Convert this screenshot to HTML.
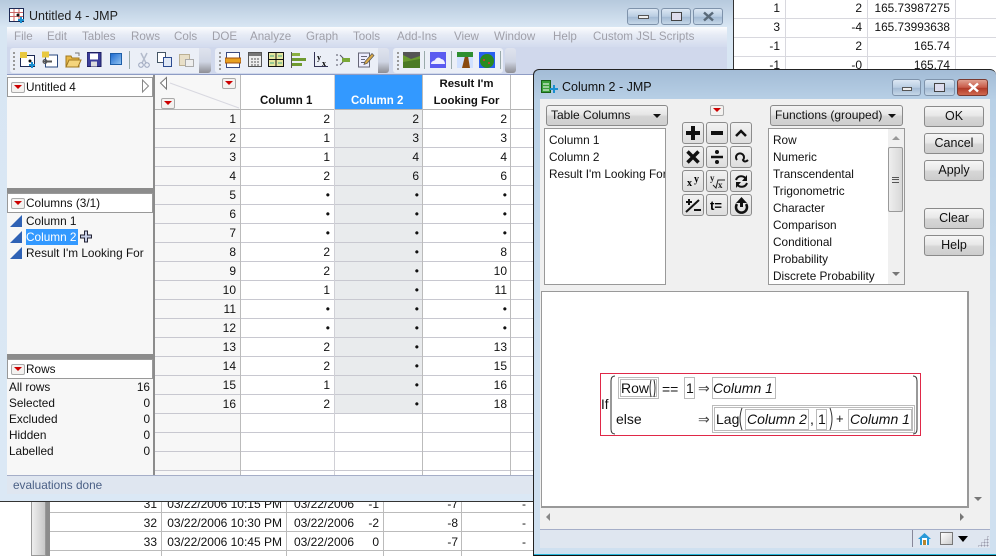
<!DOCTYPE html>
<html><head><meta charset="utf-8"><style>
html,body{margin:0;padding:0}
body{width:996px;height:556px;overflow:hidden;position:relative;background:#fff;font:11.8px/16px "Liberation Sans",sans-serif;color:#111}
div,span,svg{position:absolute;box-sizing:border-box}
.t{white-space:nowrap}
.col{text-align:right;line-height:19px;white-space:pre;font-size:12px}
.rb{width:14px;height:11px;background:#f4f2f0;border:1px solid #aaa;border-radius:2px}
.rb:after{content:"";position:absolute;left:2px;top:2px;border:4px solid transparent;border-top:4px solid #c00;border-bottom:0}
.sec{background:#fff;border:1px solid #999;left:7px;width:146px;height:20px}
.tri{width:0;height:0;left:10px;border-style:solid;border-width:0 0 12px 12px;border-color:transparent transparent #2f62b5 transparent}
.wb{height:17px;top:8px;border:1px solid #7f93ab;border-radius:3px;background:linear-gradient(#dce7f3,#b9cde2 50%,#a4bbd4 55%,#c5d7e8)}
.btn{background:linear-gradient(#f6f6f6,#e8e8e8 45%,#d6d6d6 55%,#cdcdcd);border:1px solid #8a8a8a;border-radius:3px;text-align:center;line-height:19px;font-size:12.5px}
.sel{background:linear-gradient(#f4f4f4,#e6e6e6 45%,#d4d4d4 55%,#cfcfcf);border:1px solid #8a8a8a;border-radius:3px;line-height:19px;padding-left:4px;font-size:12px;white-space:nowrap}
.sel:after{content:"";position:absolute;right:6px;top:8px;border:4px solid transparent;border-top:4px solid #111;border-bottom:0}
.cb{width:22px;height:22px;background:linear-gradient(#f2f2f2,#dedede);border:1px solid #8c8c8c;border-radius:3px}
.m{top:29px;color:#9f9fa8;font-size:11.6px}
.bx{border:1px solid #bbb}
.i{font-style:italic}
.tb{top:51px;height:18px}
.sep{width:1px;background:#9aa;height:18px;top:51px}
.ov{top:48px;height:25px;background:linear-gradient(#dfe3ee 0,#d0d6e4 55%,#8e8e94);border-radius:0 3px 3px 0}
.arrow{font-size:14px;color:#444}
</style></head><body>

<!-- background window, top-right -->
<div style="left:734px;top:0;width:262px;height:70px;background:repeating-linear-gradient(#fff 0,#fff 18px,#d8d8de 18px,#d8d8de 19px)"></div>
<div style="left:785px;top:0;width:1px;height:70px;background:#d8d8de"></div>
<div style="left:867px;top:0;width:1px;height:70px;background:#d8d8de"></div>
<div style="left:955px;top:0;width:1px;height:70px;background:#d8d8de"></div>
<div class="col" style="left:750px;width:30px;top:-1px">1
3
-1
-1</div>
<div class="col" style="left:830px;width:32px;top:-1px">2
-4
2
-0</div>
<div class="col" style="left:860px;width:90px;top:-1px;font-size:11.8px">165.73987275
165.73993638
165.74
165.74</div>

<!-- background window, bottom -->
<div style="left:31px;top:502px;width:15px;height:54px;background:linear-gradient(90deg,#eee,#c8c8c8);border:1px solid #999;border-top:0"></div>
<div style="left:46px;top:502px;width:4px;height:54px;background:#8c8c8c"></div>
<div style="left:50px;top:502px;width:490px;height:54px;background:repeating-linear-gradient(#fff 0,#fff 10px,#bbb 10px,#bbb 11px,#fff 11px,#fff 29px,#bbb 29px,#bbb 30px,#fff 30px,#fff 48px,#bbb 48px,#bbb 49px,#fff 49px)"></div>
<div style="left:161px;top:502px;width:1px;height:54px;background:#bbb"></div>
<div style="left:286px;top:502px;width:1px;height:54px;background:#bbb"></div>
<div style="left:383px;top:502px;width:1px;height:54px;background:#bbb"></div>
<div style="left:461px;top:502px;width:1px;height:54px;background:#bbb"></div>
<div style="left:0;top:502px;width:540px;height:54px;overflow:hidden">
<div class="col" style="left:120px;width:37px;top:-7px">31
32
33
34</div>
<div class="col" style="left:162px;width:120px;top:-7px">03/22/2006 10:15 PM
03/22/2006 10:30 PM
03/22/2006 10:45 PM
03/22/2006 11:00 PM</div>
<div class="col" style="left:287px;width:67px;top:-7px">03/22/2006
03/22/2006
03/22/2006
03/22/2006</div>
<div class="col" style="left:350px;width:29px;top:-7px">-1
-2
0
-1</div>
<div class="col" style="left:420px;width:38px;top:-7px">-7
-8
-7
-6</div>
<div class="col" style="left:500px;width:26px;top:-7px">-
-
-
-</div>
</div>

<!-- main window -->
<div style="left:0;top:0;width:734px;height:502px;background:linear-gradient(#b6c9dd 0,#d8e6f3 27px,#dbe8f5 500px);border:1px solid #333;border-width:0 1px 1px 0;overflow:hidden">
  <svg style="left:9px;top:8px" width="16" height="16" viewBox="0 0 16 16"><rect x=".5" y=".5" width="14" height="13" fill="#fff" stroke="#1d2a55"/><path d="M1 4.500H14M1 8.500H14M5 1V13M10 1V13" stroke="#c66" stroke-width="1"/><circle cx="9" cy="7" r="1.500" fill="#111"/><path d="M12 9v6M9 12h6" stroke="#1a8fd0" stroke-width="2"/></svg>
  <div class="t" style="left:29px;top:8px;color:#222;font-size:12.500px">Untitled 4 - JMP</div>
  <div class="wb" style="left:627px;width:32px"><div style="left:10px;top:6px;width:11px;height:4px;border:1px solid #555;background:#eee"></div></div>
  <div class="wb" style="left:661px;width:30px"><div style="left:9px;top:3px;width:11px;height:9px;border:1px solid #444;background:#dde"></div></div>
  <div class="wb" style="left:693px;width:30px"><svg style="left:8px;top:2px" width="13" height="11"><path d="M2 1.500l9 8M11 1.500l-9 8" stroke="#5a6a7a" stroke-width="2.500"/></svg></div>
  <!-- menu -->
  <div style="left:7px;top:27px;width:720px;height:20px;background:linear-gradient(#fbfcfe,#e6ebf5 40%,#d3dbee)"></div>
  <div style="left:7px;top:47px;width:720px;height:28px;background:#d0d8ec;border-bottom:1px solid #8e9cc4"></div>
  <div class="t m" style="left:14px">File</div><div class="t m" style="left:47px">Edit</div><div class="t m" style="left:82px">Tables</div><div class="t m" style="left:131px">Rows</div><div class="t m" style="left:174px">Cols</div><div class="t m" style="left:212px">DOE</div><div class="t m" style="left:250px">Analyze</div><div class="t m" style="left:306px">Graph</div><div class="t m" style="left:353px">Tools</div><div class="t m" style="left:397px">Add-Ins</div><div class="t m" style="left:454px">View</div><div class="t m" style="left:494px">Window</div><div class="t m" style="left:553px">Help</div><div class="t m" style="left:593px">Custom JSL Scripts</div>
  <!-- toolbars -->
  <div style="left:10px;top:48px;width:190px;height:25px;background:#ebeff7;border-radius:3px 0 0 3px"></div>
  <div class="ov" style="left:199px;width:12px"></div>
  <div style="left:215px;top:48px;width:164px;height:25px;background:#ebeff7;border-radius:3px 0 0 3px"></div>
  <div class="ov" style="left:378px;width:11px"></div>
  <div style="left:393px;top:48px;width:110px;height:25px;background:#ebeff7;border-radius:3px"></div>
  <div class="ov" style="left:505px;width:11px;border-radius:3px"></div>
  <div style="left:13px;top:52px;width:2px;height:18px;background:repeating-linear-gradient(#999 0,#999 2px,transparent 2px,transparent 4px)"></div>
  <div style="left:219px;top:52px;width:2px;height:18px;background:repeating-linear-gradient(#999 0,#999 2px,transparent 2px,transparent 4px)"></div>
  <div style="left:397px;top:52px;width:2px;height:18px;background:repeating-linear-gradient(#999 0,#999 2px,transparent 2px,transparent 4px)"></div>
  <svg class="tb" style="left:20px" width="16" height="16" viewBox="0 0 16 16"><rect x=".5" y="3.500" width="14" height="11" fill="#fff" stroke="#1d2a55"/><rect x="0" y="0" width="7" height="6" fill="#e8c840"/><circle cx="10" cy="9" r="1.500" fill="#111"/><path d="M12 10v6M9 13h6" stroke="#1a8fd0" stroke-width="2"/></svg>
  <svg class="tb" style="left:42px" width="17" height="17" viewBox="0 0 17 17"><rect x="3.500" y="3.500" width="12" height="12" fill="#fff" stroke="#2a4a80"/><rect x="0" y="0" width="7" height="6" fill="#e8c840"/><path d="M1 10h9" stroke="#555" stroke-width="2"/><circle cx="3" cy="10" r="2" fill="none" stroke="#555"/></svg>
  <svg class="tb" style="left:65px" width="17" height="16" viewBox="0 0 17 16"><path d="M1 4h5l1 2h7v9H1z" fill="#e8b848" stroke="#a07820"/><path d="M1 15l3-7h12l-3 7z" fill="#f4d47c" stroke="#a07820"/><path d="M10 1h4v3" fill="none" stroke="#777"/></svg>
  <svg class="tb" style="left:87px" width="15" height="15" viewBox="0 0 15 15"><rect width="14" height="14" fill="#3c3e9a" stroke="#1d1d60"/><rect x="3" y="1" width="8" height="6" fill="#fff"/><rect x="4" y="9" width="6" height="5" fill="#ddd"/></svg>
  <div style="left:110px;top:53px;width:12px;height:12px;background:linear-gradient(135deg,#1f6bd0,#8ec1f0);border:1px solid #1d5ea8"></div>
  <div class="sep" style="left:129px"></div>
  <svg class="tb" style="left:137px" width="14" height="16" viewBox="0 0 14 16"><path d="M4 1l5 10M10 1l-5 10" stroke="#b4bccc" stroke-width="1.500"/><circle cx="4" cy="13" r="2.300" fill="none" stroke="#9aa4bc"/><circle cx="10" cy="13" r="2.300" fill="none" stroke="#9aa4bc"/></svg>
  <svg class="tb" style="left:157px" width="16" height="16" viewBox="0 0 16 16"><rect x=".5" y=".5" width="8" height="10" fill="#fff" stroke="#456"/><rect x="6.500" y="5.500" width="8" height="9" fill="#dfe8f6" stroke="#2a4a90"/></svg>
  <svg class="tb" style="left:179px" width="16" height="16" viewBox="0 0 16 16"><rect x=".5" y="2.500" width="10" height="11" fill="#e8dfc8" stroke="#bbb094"/><rect x="6.500" y="7.500" width="8" height="7" fill="#eee" stroke="#aaa"/></svg>
  <svg class="tb" style="left:225px" width="16" height="16" viewBox="0 0 16 16"><rect x="1.500" y=".5" width="13" height="15" fill="#fff" stroke="#3a4a80"/><rect x="0" y="6" width="16" height="5" fill="#e8a020" stroke="#a05010"/></svg>
  <svg class="tb" style="left:248px" width="15" height="16" viewBox="0 0 15 16"><rect x=".5" y=".5" width="13" height="14" fill="#eee" stroke="#555"/><rect x="1" y="1" width="12" height="3" fill="#777"/><path d="M3 7h2M6 7h2M9 7h2M3 10h2M6 10h2M9 10h2M3 13h2M6 13h2M9 13h2" stroke="#555"/></svg>
  <svg class="tb" style="left:268px" width="17" height="16" viewBox="0 0 17 16"><rect x=".5" y=".5" width="15" height="14" fill="#e6e6a0" stroke="#111"/><path d="M8 0v15M0 7.500h16" stroke="#111"/><path d="M3 3v2M5 3v2M11 3v2M13 3v2M3 10v2M5 10v2M11 10v2M13 10v2" stroke="#4a8"/></svg>
  <svg class="tb" style="left:291px" width="15" height="16" viewBox="0 0 15 16"><path d="M.5 0v16" stroke="#555"/><rect x="1" y="1" width="8" height="3" fill="#8ab040"/><rect x="1" y="6" width="14" height="3" fill="#6f9a30"/><rect x="1" y="11" width="10" height="3" fill="#6f9a30"/></svg>
  <svg class="tb" style="left:313px" width="16" height="16" viewBox="0 0 16 16"><path d="M1.500 0v14.500H15" fill="none" stroke="#335"/><text x="4" y="8" font-family="Liberation Serif" font-size="8" font-weight="bold">y</text><text x="9" y="14" font-family="Liberation Serif" font-size="8" font-weight="bold">x</text></svg>
  <svg class="tb" style="left:335px" width="16" height="16" viewBox="0 0 16 16"><path d="M1 3h2M1 8h2M1 13h2M5 3l5 5-5 5" stroke="#556" fill="none"/><rect x="7" y="6" width="8" height="4" fill="#7aa838"/></svg>
  <svg class="tb" style="left:358px" width="17" height="17" viewBox="0 0 17 17"><rect x=".5" y="1.500" width="11" height="14" fill="#eef" stroke="#667"/><path d="M3 5h6M3 8h4M3 11h4" stroke="#667"/><path d="M14 2l2 2-7 8-3 1 1-3z" fill="#d8a848" stroke="#555" stroke-width=".7"/></svg>
  <svg class="tb" style="left:403px" width="17" height="16" viewBox="0 0 17 16"><rect width="17" height="16" fill="#6a9a30"/><path d="M0 0h17v4L8 7 0 3z" fill="#555"/><path d="M0 10l17-3v9H0z" fill="#4a7a24"/></svg>
  <div class="sep" style="left:424px"></div>
  <svg class="tb" style="left:430px" width="16" height="16" viewBox="0 0 16 16"><rect width="16" height="16" fill="#5a5af0"/><path d="M1 12c0-3 3-3 4-4 1-3 5-3 6-1 2 0 4 2 4 5z" fill="#eef"/></svg>
  <div class="sep" style="left:451px"></div>
  <svg class="tb" style="left:457px" width="16" height="16" viewBox="0 0 16 16"><rect width="16" height="16" fill="#cfe0ff"/><path d="M5 16L8 4h3l2 12z" fill="#8a4a10"/><rect x="0" y="0" width="16" height="5" fill="#2f8f2f"/></svg>
  <svg class="tb" style="left:479px" width="16" height="16" viewBox="0 0 16 16"><rect width="16" height="16" fill="#2a60f0"/><ellipse cx="8" cy="9" rx="7" ry="7" fill="#2a8a20"/><circle cx="5" cy="8" r="1" fill="#d33"/><circle cx="10" cy="11" r="1" fill="#d33"/></svg>
  <div class="sep" style="left:500px"></div>
  <!-- left panel -->
  <div style="left:7px;top:75px;width:148px;height:400px;background:#f7f7f7"></div>
  <div style="left:153px;top:75px;width:2px;height:400px;background:#8c8c8c"></div>
  <div class="sec" style="top:77px"></div>
  <div class="rb" style="left:11px;top:82px"></div>
  <div class="t" style="left:26px;top:79px">Untitled 4</div>
  <svg style="left:141px;top:79px" width="10" height="15"><path d="M1.500 1l6 6-6 6z" fill="#fff" stroke="#888"/></svg>
  <div style="left:7px;top:188px;width:146px;height:5px;background:#8c8c8c"></div>
  <div class="sec" style="top:193px"></div>
  <div class="rb" style="left:11px;top:198px"></div>
  <div class="t" style="left:26px;top:195px">Columns (3/1)</div>
  <div class="tri" style="top:215px"></div><div class="t" style="left:26px;top:213px">Column 1</div>
  <div class="tri" style="top:231px"></div><div style="left:26px;top:229px;width:52px;height:16px;background:#3399ff"></div><div class="t" style="left:26px;top:229px;color:#fff">Column 2</div>
  <svg style="left:80px;top:230px" width="13" height="14"><path d="M4.500 1h3v4h4v3h-4v4h-3V8h-4V5h4z" fill="#c8d0e8" stroke="#223"/></svg>
  <div class="tri" style="top:247px"></div><div class="t" style="left:26px;top:245px">Result I'm Looking For</div>
  <div style="left:7px;top:354px;width:146px;height:5px;background:#8c8c8c"></div>
  <div class="sec" style="top:359px"></div>
  <div class="rb" style="left:11px;top:364px"></div>
  <div class="t" style="left:26px;top:361px">Rows</div>
  <div class="t" style="left:9px;top:379px">All rows</div><div class="t" style="left:9px;top:395px">Selected</div><div class="t" style="left:9px;top:411px">Excluded</div><div class="t" style="left:9px;top:427px">Hidden</div><div class="t" style="left:9px;top:443px">Labelled</div>
  <div class="t" style="right:583px;top:379px">16</div><div class="t" style="right:583px;top:395px">0</div><div class="t" style="right:583px;top:411px">0</div><div class="t" style="right:583px;top:427px">0</div><div class="t" style="right:583px;top:443px">0</div>
  <!-- table -->
  <div style="left:155px;top:75px;width:85px;height:400px;background:#f7f7f7"></div>
  <div style="left:240px;top:75px;width:487px;height:400px;background:#fff"></div>
  <div style="left:334px;top:75px;width:88px;height:34px;background:#3399ff"></div>
  <div style="left:334px;top:109px;width:88px;height:304px;background:#e9ebed"></div>
  <div style="left:155px;top:109px;width:572px;height:366px;background:repeating-linear-gradient(#c8c8d0 0,#c8c8d0 1px,transparent 1px,transparent 19px)"></div>
  <div style="left:155px;top:109px;width:572px;height:1px;background:#b4b4b4"></div>
  <div style="left:240px;top:75px;width:1px;height:400px;background:#bbb"></div>
  <div style="left:334px;top:75px;width:1px;height:400px;background:#d0d0d6"></div>
  <div style="left:422px;top:75px;width:1px;height:400px;background:#bbb"></div>
  <div style="left:510px;top:75px;width:1px;height:400px;background:#bbb"></div>
  <svg style="left:155px;top:75px" width="85" height="34"><path d="M15 8L84 33" stroke="#d8d8e0" fill="none"/><path d="M11.500 2.500L5.500 8l6 6z" fill="#fff" stroke="#777"/></svg>
  <div class="rb" style="left:222px;top:78px"></div>
  <div class="rb" style="left:161px;top:98px"></div>
  <div class="t" style="left:260px;top:93px;font-weight:bold;font-size:11.500px">Column 1</div>
  <div class="t" style="left:351px;top:93px;font-weight:bold;font-size:11.500px;color:#fff">Column 2</div>
  <div class="t" style="left:423px;top:76px;width:87px;text-align:center;font-weight:bold;font-size:11.400px;line-height:17px">Result I'm<br>Looking For</div>
  <div class="col" style="left:155px;width:81px;top:110px">1
2
3
4
5
6
7
8
9
10
11
12
13
14
15
16</div>
  <div class="col" style="left:240px;width:90px;top:110px">2
1
1
2
•
•
•
2
2
1
•
•
2
2
1
2</div>
  <div class="col" style="left:334px;width:85px;top:110px">2
3
4
6
•
•
•
•
•
•
•
•
•
•
•
•</div>
  <div class="col" style="left:422px;width:85px;top:110px">2
3
4
6
•
•
•
8
10
11
•
•
13
15
16
18</div>
  <div style="left:7px;top:475px;width:720px;height:19px;background:#dfe6f0;border-top:1px solid #a5aec8"></div>
  <div class="t" style="left:13px;top:477px;color:#4a5f85">evaluations done</div>
</div>

<!-- dialog -->
<div style="left:533px;top:69px;width:463px;height:487px;background:linear-gradient(#a3bcd6 0,#b8d0e6 30px,#cfe0f0 300px);border:1px solid #222;border-radius:6px 6px 0 0;border-right:0;border-bottom:1px solid #111"></div>
<div style="left:534px;top:554px;width:462px;height:1px;background:#29b6d8"></div>
<svg style="left:541px;top:80px" width="17" height="15" viewBox="0 0 17 15"><rect x=".5" y=".5" width="9" height="12" fill="#3aa03a" stroke="#186018"/><path d="M2 4h6M2 7h6M2 10h6" stroke="#fff"/><path d="M13 5v8M9 9h8" stroke="#1a8fd0" stroke-width="2"/></svg>
<div class="t" style="left:562px;top:79px;font-size:12.500px;color:#111">Column 2 - JMP</div>
<div class="wb" style="left:892px;top:79px;width:29px"><div style="left:9px;top:7px;width:10px;height:4px;border:1px solid #555;background:#eee"></div></div>
<div class="wb" style="left:924px;top:79px;width:31px"><div style="left:9px;top:3px;width:11px;height:9px;border:1px solid #444;background:#dde"></div></div>
<div class="wb" style="left:957px;top:79px;width:31px;background:linear-gradient(#e0a090,#c85a48 50%,#b03a28 55%,#d06a50);border-color:#7a3a30"><svg style="left:9px;top:2px" width="13" height="11"><path d="M2 1.500l9 8M11 1.500l-9 8" stroke="#fff" stroke-width="2.500"/></svg></div>
<div style="left:540px;top:99px;width:450px;height:430px;background:#f0f0f0"></div>
<div class="sel" style="left:546px;top:105px;width:122px;height:21px">Table Columns</div>
<div style="left:544px;top:128px;width:122px;height:157px;background:#fff;border:1px solid #999;overflow:hidden"><div class="t" style="left:4px;top:3px;line-height:17px">Column 1<br>Column 2<br>Result I'm Looking For</div></div>
<div class="rb" style="left:710px;top:105px"></div>
<div class="cb" style="left:682px;top:122px"><svg style="left:3px;top:3px" width="14" height="14"><path d="M7 0v14M0 7h14" stroke="#111" stroke-width="4"/></svg></div>
<div class="cb" style="left:706px;top:122px"><svg style="left:3px;top:3px" width="14" height="14"><path d="M1 7h12" stroke="#111" stroke-width="4"/></svg></div>
<div class="cb" style="left:730px;top:122px"><svg style="left:4px;top:6px" width="13" height="8"><path d="M1 7l5-5 5 5" fill="none" stroke="#111" stroke-width="2.500"/></svg></div>
<div class="cb" style="left:682px;top:146px"><svg style="left:3px;top:3px" width="14" height="14"><path d="M1.500 1.500l11 11M12.500 1.500l-11 11" stroke="#111" stroke-width="3.500"/></svg></div>
<div class="cb" style="left:706px;top:146px"><svg style="left:3px;top:3px" width="14" height="14"><path d="M1 7h12" stroke="#111" stroke-width="2.500"/><circle cx="7" cy="2" r="2" fill="#111"/><circle cx="7" cy="12" r="2" fill="#111"/></svg></div>
<div class="cb" style="left:730px;top:146px"><svg style="left:3px;top:3px" width="16" height="15"><path d="M3 10a4 4 0 1 1 6 0c1 2 3 2 5 0" fill="none" stroke="#111" stroke-width="2"/></svg></div>
<div class="cb" style="left:682px;top:170px"><svg style="left:0;top:0" width="20" height="20" font-family="Liberation Serif" font-weight="bold"><text x="4" y="15" font-size="10">x</text><text x="11" y="11" font-size="10">y</text></svg></div>
<div class="cb" style="left:706px;top:170px"><svg style="left:0;top:0" width="20" height="20" font-family="Liberation Serif" font-weight="bold" fill="#222"><text x="3" y="10" font-size="9">y</text><text x="11" y="17" font-size="9">x</text><path d="M6 14l3 3 2-8h7" stroke="#222" fill="none"/></svg></div>
<div class="cb" style="left:730px;top:170px"><svg style="left:3px;top:3px" width="15" height="15"><path d="M2 6a5.500 5.500 0 0 1 10-1M13 9a5.500 5.500 0 0 1-10 1" fill="none" stroke="#111" stroke-width="2"/><path d="M13 1v6H8zM2 14V8h5z" fill="#111"/></svg></div>
<div class="cb" style="left:682px;top:194px"><svg style="left:2px;top:2px" width="17" height="17"><path d="M1 5h6M4 2v6M1 15L14 3M9 13h7" fill="none" stroke="#111" stroke-width="2"/></svg></div>
<div class="cb" style="left:706px;top:194px"><svg style="left:0;top:0" width="20" height="20"><text x="3" y="15" font-family="Liberation Sans" font-weight="bold" font-size="13">t=</text></svg></div>
<div class="cb" style="left:730px;top:194px"><svg style="left:3px;top:2px" width="15" height="17"><path d="M7.500 0L13 6H9v4H6V6H2z" fill="#111"/><path d="M3 7a5.500 5.500 0 1 0 9 0" fill="none" stroke="#111" stroke-width="2.500"/></svg></div>
<div class="sel" style="left:770px;top:105px;width:133px;height:21px">Functions (grouped)</div>
<div style="left:768px;top:128px;width:137px;height:157px;background:#fff;border:1px solid #999;overflow:hidden"><div class="t" style="left:4px;top:3px;line-height:17px">Row<br>Numeric<br>Transcendental<br>Trigonometric<br>Character<br>Comparison<br>Conditional<br>Probability<br>Discrete Probability</div>
<div style="left:119px;top:0;width:16px;height:155px;background:#f0f0f0"></div>
<div style="left:119px;top:18px;width:15px;height:65px;background:linear-gradient(90deg,#eee,#d8d8d8);border:1px solid #999;border-radius:2px"><div style="left:3px;top:29px;width:7px;height:6px;border-top:1px solid #555;border-bottom:1px solid #555"><div style="left:0;top:1px;width:7px;height:1px;background:#555"></div></div></div>
<div style="left:123px;top:7px;border:4px solid transparent;border-bottom:4px solid #999;border-top:0"></div>
<div style="left:123px;top:143px;border:4px solid transparent;border-top:4px solid #777;border-bottom:0"></div>
</div>
<div class="btn" style="left:924px;top:106px;width:60px;height:21px">OK</div>
<div class="btn" style="left:924px;top:133px;width:60px;height:21px">Cancel</div>
<div class="btn" style="left:924px;top:160px;width:60px;height:21px">Apply</div>
<div class="btn" style="left:924px;top:208px;width:60px;height:21px">Clear</div>
<div class="btn" style="left:924px;top:235px;width:60px;height:21px">Help</div>
<!-- editor -->
<div style="left:541px;top:291px;width:428px;height:217px;background:#fff;border:1px solid #999;border-width:1px 2px 2px 1px"></div>
<div style="left:974px;top:497px;border:4px solid transparent;border-top:4px solid #777;border-bottom:0"></div>
<div style="left:546px;top:513px;border:4px solid transparent;border-right:4px solid #888;border-left:0"></div>
<div style="left:960px;top:513px;border:4px solid transparent;border-left:4px solid #777;border-right:0"></div>
<div style="left:540px;top:529px;width:450px;height:19px;background:#dfe6f0;border-top:1px solid #a5aec8"></div>
<div style="left:912px;top:530px;width:1px;height:17px;background:#889"></div>
<svg style="left:918px;top:532px" width="13" height="13"><path d="M6.500 1L0 7h2v6h9V7h2z" fill="#2a9ad8"/><rect x="4" y="6" width="5" height="7" fill="#fff"/><rect x="5" y="8" width="3" height="5" fill="#b8862c"/></svg>
<div style="left:940px;top:532px;width:13px;height:13px;border:1px solid #777;background:linear-gradient(135deg,#fff,#ccc)"></div>
<div style="left:958px;top:536px;border:5px solid transparent;border-top:6px solid #000;border-bottom:0"></div>
<div style="left:977px;top:535px;width:12px;height:12px;background:radial-gradient(#99a 1px,transparent 1px) 0 0/3px 3px;clip-path:polygon(100% 0,100% 100%,0 100%)"></div>
<!-- formula -->
<div style="left:600px;top:373px;width:321px;height:63px;border:1px solid #e02848"></div>
<div class="t" style="left:601px;top:397px;font-size:13.500px">If</div>
<svg style="left:609px;top:375px" width="312" height="60" fill="none" stroke="#333"><path d="M6 1Q2 1 2 6v48q0 5 4 5M304 1q4 0 4 5v48q0 5-4 5"/></svg>
<div class="bx" style="left:618px;top:377px;width:41px;height:22px"></div><div class="bx" style="left:620px;top:379px;width:37px;height:18px"></div>
<div class="t" style="left:621px;top:380px;font-size:14px">Row</div>
<svg style="left:648px;top:379px" width="10" height="19" fill="none" stroke="#333"><path d="M3 1Q1 9 3 18M6 1Q8 9 6 18"/></svg>
<div class="t" style="left:662px;top:381px;font-size:14px">==</div>
<div class="bx" style="left:684px;top:377px;width:11px;height:22px"></div><div class="t" style="left:686px;top:380px;font-size:14px">1</div>
<div class="t arrow" style="left:698px;top:380px">⇒</div>
<div class="bx" style="left:712px;top:377px;width:64px;height:22px"></div><div class="t i" style="left:713px;top:380px;font-size:14px">Column 1</div>
<div class="t" style="left:616px;top:411px;font-size:14px">else</div>
<div class="t arrow" style="left:698px;top:411px">⇒</div>
<div class="bx" style="left:712px;top:405px;width:203px;height:28px"></div><div class="bx" style="left:714px;top:407px;width:199px;height:24px"></div>
<div class="t" style="left:716px;top:411px;font-size:14px">Lag</div>
<svg style="left:738px;top:407px" width="100" height="24" fill="none" stroke="#333"><path d="M4 1Q0 12 4 23M92 1q4 11 0 22"/></svg>
<div class="bx" style="left:745px;top:409px;width:64px;height:21px"></div><div class="t i" style="left:747px;top:411px;font-size:14px">Column 2</div>
<div class="t" style="left:810px;top:411px;font-size:14px">,</div>
<div class="bx" style="left:816px;top:409px;width:11px;height:21px"></div><div class="t" style="left:818px;top:411px;font-size:14px">1</div>
<div class="t" style="left:836px;top:411px;font-size:13px">+</div>
<div class="bx" style="left:848px;top:409px;width:64px;height:21px"></div><div class="t i" style="left:850px;top:411px;font-size:14px">Column 1</div>
</body></html>
